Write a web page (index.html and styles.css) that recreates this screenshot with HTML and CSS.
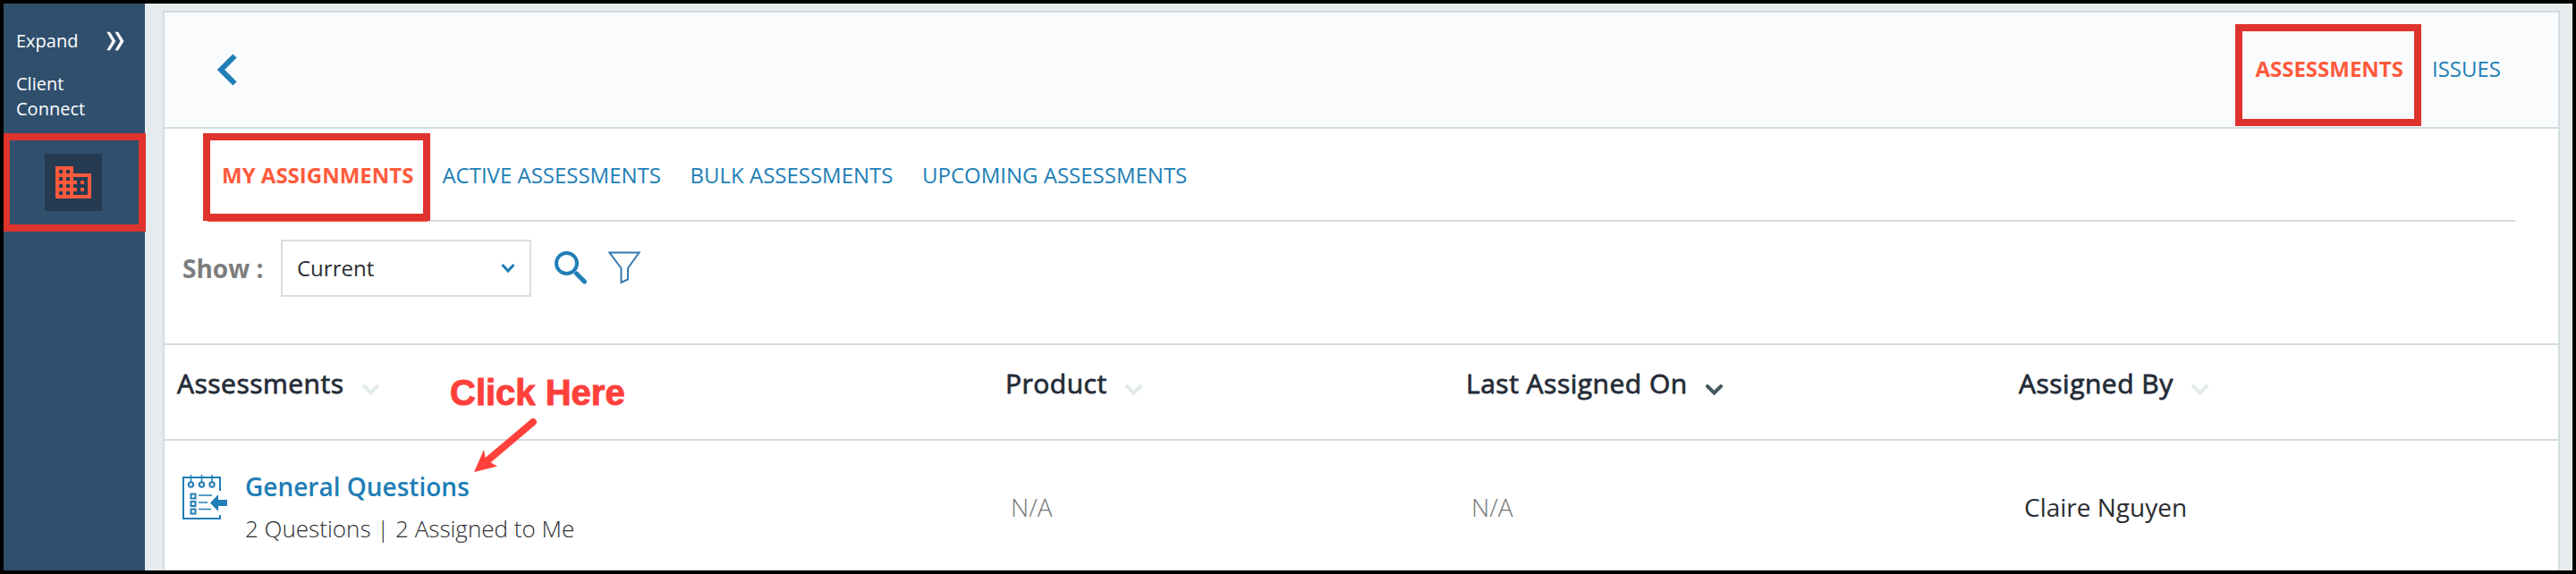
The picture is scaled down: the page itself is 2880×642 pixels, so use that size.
FILE: index.html
```html
<!DOCTYPE html>
<html lang="en">
<head>
<meta charset="utf-8">
<title>Assessments</title>
<link rel="stylesheet" href="styles.css">
</head>
<body>
<div class="app">
  <aside class="sidebar">
    <div class="expand"><span>Expand</span>
      <svg class="expand-icon" width="20" height="22" viewBox="0 0 20 22"><path d="M.8 1H3.8L10 11L3.8 21H.8L6.600 11ZM10 1H13L19.200 11L13 21H10L15.800 11Z" fill="#fff" stroke="#fff" stroke-width=".6"/></svg>
    </div>
    <div class="product-name">Client<br>Connect</div>
    <div class="nav-tile">
      <svg width="40" height="36" viewBox="0 0 40 36"><path fill="#ff5a3c" fill-rule="evenodd" d="M0 0H20V8H40V36H0ZM4 4V8H8V4ZM12 4V8H16V4ZM4 12V16H8V12ZM12 12V16H16V12ZM4 20V24H8V20ZM12 20V24H16V20ZM4 28V32H8V28ZM12 28V32H16V28ZM20 12V16H24V20H20V24H24V28H20V32H36V12ZM28 16H32V20H28ZM28 24H32V28H28Z"/></svg>
    </div>
  </aside>
  <main class="panel">
    <header class="topbar">
      <svg class="back" width="22" height="36" viewBox="0 0 22 36"><path d="M19.5 2.5L4 18L19.5 33.5" fill="none" stroke="#207eb6" stroke-width="6"/></svg>
      <nav class="views"><b class="view-active">ASSESSMENTS</b><span>ISSUES</span></nav>
    </header>
    <nav class="tabs">
      <b class="tab tab-active">MY ASSIGNMENTS</b><span class="tab">ACTIVE ASSESSMENTS</span><span class="tab">BULK ASSESSMENTS</span><span class="tab">UPCOMING ASSESSMENTS</span>
    </nav>
    <div class="filters">
      <span class="show">Show :</span>
      <div class="select"><span>Current</span>
        <svg width="16" height="12" viewBox="0 0 16 12"><path d="M1.5 2L8 9L14.5 2" fill="none" stroke="#207eb6" stroke-width="3"/></svg>
      </div>
      <svg class="search" width="37" height="37" viewBox="0 0 37 37"><circle cx="13.500" cy="13.500" r="11.500" fill="none" stroke="#207eb6" stroke-width="4"/><path d="M24.500 25L33.500 34" stroke="#207eb6" stroke-width="5" stroke-linecap="round"/></svg>
      <svg class="funnel" width="37" height="38" viewBox="0 0 37 38"><path d="M1.5 1.5H34.5L22 19V31.500L14.500 35V19Z" fill="none" stroke="#3479b0" stroke-width="2"/></svg>
    </div>
    <div class="grid table-head">
      <div class="th">Assessments<svg class="sort" viewBox="0 0 19 12"><path d="M2 2L9.5 9.5L17 2"/></svg></div>
      <div class="th">Product<svg class="sort" viewBox="0 0 19 12"><path d="M2 2L9.5 9.5L17 2"/></svg></div>
      <div class="th">Last Assigned On<svg class="sort sorted" viewBox="0 0 19 12"><path d="M2 2L9.5 9.5L17 2"/></svg></div>
      <div class="th">Assigned By<svg class="sort" viewBox="0 0 19 12"><path d="M2 2L9.5 9.5L17 2"/></svg></div>
    </div>
    <div class="grid table-row">
      <div class="assessment">
        <svg width="50" height="51" viewBox="0 0 50 51" fill="none" stroke="#207eb6" stroke-width="2"><path d="M42 18V3H1V49H42V45"/><path d="M9.500 0V8M21.500 0V8M33 0V8" stroke-width="1.500"/><circle cx="9.500" cy="11" r="2.700"/><circle cx="21.500" cy="11" r="2.700"/><circle cx="33" cy="11" r="2.700"/><path d="M9.500 21.500H14.500V26.500H9.500ZM9.500 30H14.500V35H9.500ZM9.500 38.500H14.500V43.500H9.500Z"/><path d="M18 23H33M18 31H28M18 38.500H32" stroke-width="1.500"/><path d="M31 31.500L40 22V28H50V35H40V41Z" fill="#207eb6" stroke="none"/></svg>
        <div><a class="name">General Questions</a><div class="meta">2 Questions | 2 Assigned to Me</div></div>
      </div>
      <div class="cell muted">N/A</div>
      <div class="cell muted">N/A</div>
      <div class="cell">Claire Nguyen</div>
    </div>
  </main>
  <div class="mark mark-nav"></div>
  <div class="mark mark-tab"></div>
  <div class="mark mark-view"></div>
  <div class="callout">Click Here</div>
  <svg class="arrow" width="72" height="72" viewBox="0 0 72 72"><path d="M66 6L14 50" stroke="#ff403b" stroke-width="8" stroke-linecap="round"/><path d="M0 62L11 37L13 48L26 55.500Z" fill="#ff403b"/></svg>
</div>
</body>
</html>
```
FILE: styles.css
```css
* { box-sizing: border-box; }
body { margin: 0; font-family: "Open Sans", "Noto Sans", sans-serif; color: #2b2d31; }
svg { display: block; flex: none; }
.app { position: relative; display: flex; width: 2880px; height: 642px; padding-right: 14px; border: 4px solid #000; background: #e6ecee; overflow: hidden; white-space: nowrap; }
.sidebar { width: 158px; flex: none; padding-top: 28px; background: #304f6d; color: #fff; font-size: 20px; line-height: 28px; }
.expand { display: flex; justify-content: space-between; height: 28px; padding: 0 23px 0 14px; }
.product-name { padding: 20px 0 0 14px; }
.expand-icon { margin-top: 3px; }
.nav-tile { display: grid; place-items: center; width: 64px; height: 64px; margin: 36px 0 0 46px; background: #253b51; }
.panel { flex: 1; margin: 8px 0 0 20px; border: 2px solid #d3dde0; border-bottom: 0; background: #fff; }
.topbar { display: flex; justify-content: space-between; height: 130px; padding: 45px 64px 0 59px; border-bottom: 2px solid #d3dde0; background: #fafbfd; }
.back { margin-top: 1px; }
.views { display: flex; gap: 32px; font-size: 24px; line-height: 36px; color: #207eb6; }
.view-active { color: #ff5a3c; }
.tabs { display: flex; height: 104px; margin: 0 48px; padding-top: 34px; border-bottom: 2px solid #d3dde0; font-size: 24px; line-height: 36px; color: #207eb6; }
.tab { margin-right: 32.5px; }
.tab-active { height: 70px; padding: 0 16px; margin-right: 16px; border-bottom: 2px solid #ff5a3c; color: #ff5a3c; }
.filters { display: flex; height: 138px; padding: 20px 0 0 20px; border-bottom: 2px solid #d3dde0; }
.show { width: 110px; font-size: 28px; font-weight: 700; line-height: 64px; color: #7d7d7d; }
.select { display: flex; justify-content: space-between; align-items: center; width: 280px; height: 64px; padding: 0 16px; border: 2px solid #ddd; font-size: 24px; line-height: 60px; }
.search { margin: 13px 0 0 26px; }
.funnel { margin: 13px 0 0 23px; }
.grid { display: grid; grid-template-columns: 926px 515px 618px 1fr; padding-left: 14px; }
.table-head { height: 107px; padding-top: 23px; border-bottom: 2px solid #d3dde0; font-size: 30px; letter-spacing: .5px; line-height: 40px; color: #242c37; -webkit-text-stroke: .8px #242c37; }
.th { display: flex; }
.sort { width: 19px; height: 12px; margin: 21px 0 0 20px; fill: none; stroke: #e3eaec; stroke-width: 4; stroke-linecap: round; }
.sorted { stroke: #455861; }
.assessment { display: flex; gap: 20px; padding: 38px 0 0 6px; }
.name { display: block; margin-top: -7px; font-size: 28px; font-weight: 600; line-height: 40px; color: #207eb6; }
.meta { margin-top: 7px; font-size: 26px; font-weight: 300; line-height: 40px; }
.cell { padding: 54px 0 0 6px; font-size: 28px; line-height: 40px; }
.muted { font-weight: 300; color: #777; }
.mark { position: absolute; border: 8px solid #df332e; }
.mark-nav { left: -1px; top: 145px; width: 160px; height: 110px; }
.mark-tab { left: 223px; top: 145px; width: 254px; height: 98px; }
.mark-view { left: 2495px; top: 23px; width: 208px; height: 114px; }
.callout { position: absolute; left: 499px; top: 411px; font: 700 40px/48px "Liberation Sans", Arial, sans-serif; color: #ff403b; -webkit-text-stroke: 1px #ff403b; }
.arrow { position: absolute; left: 526px; top: 462px; }
```
